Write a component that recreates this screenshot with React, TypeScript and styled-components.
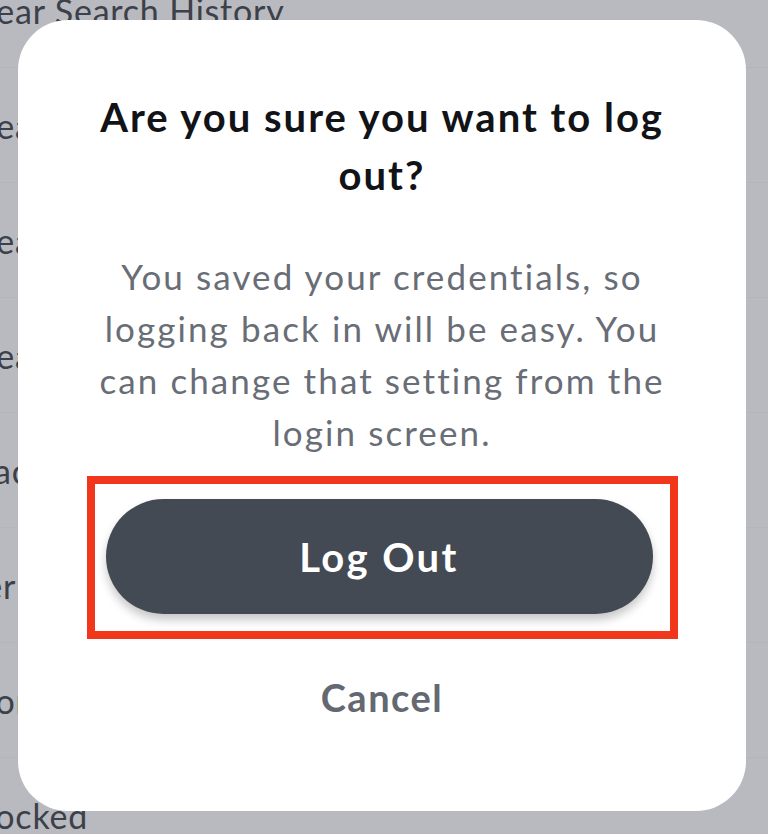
import styled, { createGlobalStyle } from 'styled-components';

const GlobalStyle = createGlobalStyle`
  html, body {
    margin: 0;
    padding: 0;
    background: #b8babf;
  }
  body {
    font-family: Lato, "Open Sans", "Liberation Sans", sans-serif;
  }
`;

const Screen = styled.div`
  position: relative;
  width: 768px;
  height: 834px;
  overflow: hidden;
  background: #b8babf;
`;

const SettingsList = styled.div`
  display: flex;
  flex-direction: column;
  margin-top: -47px;
  margin-left: -36px;
`;

const SettingsRow = styled.div`
  height: 114px;
  display: flex;
  align-items: center;
  border-bottom: 1px solid #b3b5ba;
  font-size: 34px;
  letter-spacing: 0.8px;
  color: #3c4049;
  white-space: nowrap;
`;

const Dialog = styled.div`
  position: absolute;
  left: 18px;
  top: 20px;
  width: 728px;
  height: 791px;
  box-sizing: border-box;
  background: #ffffff;
  border-radius: 50px;
  display: flex;
  flex-direction: column;
  align-items: center;
  padding: 68px 60px 0;
`;

const Title = styled.h2`
  margin: 0;
  max-width: 590px;
  font-size: 40px;
  line-height: 58px;
  font-weight: 700;
  letter-spacing: 2px;
  color: #121317;
  text-align: center;
`;

const Body = styled.p`
  margin: 46px 0 0;
  max-width: 580px;
  font-size: 35px;
  line-height: 52px;
  font-weight: 400;
  letter-spacing: 2.1px;
  color: #686d76;
  text-align: center;
`;

const Highlight = styled.div`
  margin-top: 18px;
  width: 591px;
  box-sizing: border-box;
  border: 8px solid #f2361c;
  padding: 15px 17px 17px 11px;
`;

const PrimaryButton = styled.button`
  width: 100%;
  height: 115px;
  border: none;
  border-radius: 58px;
  background: #434a53;
  color: #ffffff;
  font-family: inherit;
  font-size: 40px;
  font-weight: 700;
  letter-spacing: 2.4px;
  box-shadow: 0 6px 10px rgba(0, 0, 0, 0.22);
  cursor: pointer;
`;

const TextButton = styled.button`
  margin-top: 34px;
  border: none;
  background: transparent;
  color: #636871;
  font-family: inherit;
  font-size: 38px;
  font-weight: 700;
  letter-spacing: 1.5px;
  cursor: pointer;
`;

const rows = [
  'Clear Search History',
  'Clear Top Locations',
  'Clear Conversations',
  'Clear Cache',
  'Tracking Preferences',
  'Permissions',
  'Stories',
  'Blocked',
];

export default function App() {
  return (
    <>
      <GlobalStyle />
      <Screen>
        <SettingsList>
          {rows.map((label) => (
            <SettingsRow key={label}>{label}</SettingsRow>
          ))}
        </SettingsList>
        <Dialog>
          <Title>Are you sure you want to log out?</Title>
          <Body>
            You saved your credentials, so logging back in will be easy. You can change that setting from the login screen.
          </Body>
          <Highlight>
            <PrimaryButton>Log Out</PrimaryButton>
          </Highlight>
          <TextButton>Cancel</TextButton>
        </Dialog>
      </Screen>
    </>
  );
}
